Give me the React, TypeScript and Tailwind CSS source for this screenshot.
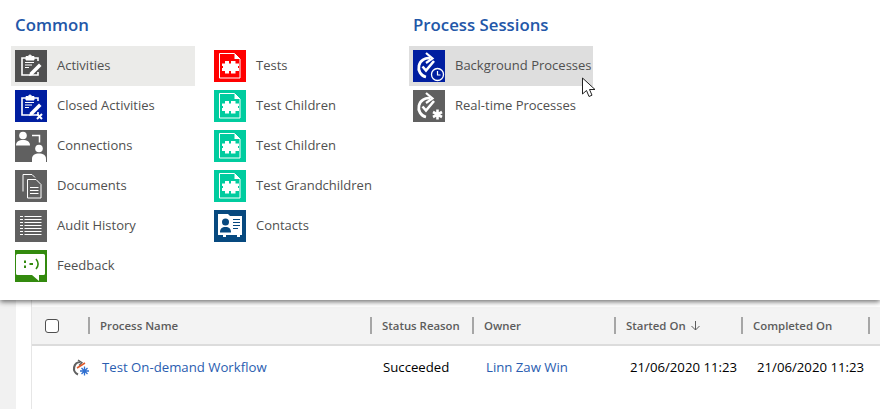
import React from 'react';

const font = "font-['Open_Sans','Noto_Sans',sans-serif]";

const Clipboard = () => (
  <g fill="none" stroke="#fff">
    <path d="M19 8h4v3M23 22v3H7V8h4" strokeWidth="1.600" />
    <path d="M11 8V6.500h2.500a1.500 1.500 0 0 1 3 0H19V8v2h-8z" fill="#fff" strokeWidth="1" />
    <path d="M10 12.500h9M10 15h7M10 17.500h4" strokeWidth="1.200" />
    <path d="M15 22.500l9-9 2.500 2.500-9 9-3.500 1z" fill="#fff" stroke="none" />
  </g>
);

const Puzzle = () => (
  <g>
    <path d="M5.500 3.500h15l5.500 5.500v19H5.500z" fill="none" stroke="#fff" strokeWidth="1" />
    <path d="M20.500 3.500V9H26z" fill="#fff" />
    <path d="M8 13.500h3V11h4v2.500h2V11h4.500v2.500H25v2.500h-1v2h1v3h-3.500v2.500H17V21h-2v2.500h-4V21H8v-3h1v-2H8z" fill="#fff" />
  </g>
);

const Process = () => (
  <g fill="none" stroke="#fff">
    <path d="M17.500 8.500A9.500 9.500 0 0 0 13 27" strokeWidth="2.800" />
    <path d="M13 3l6.500 5.500-6.500 4.500" strokeWidth="2.200" />
    <path d="M9.500 16.500l3.500 4 8-9.500" strokeWidth="2.600" />
  </g>
);

const icons: Record<string, React.ReactNode> = {
  activities: <Clipboard />,
  closed: (
    <g>
      <Clipboard />
      <path d="M22 24l5 5M27 24l-5 5" stroke="#fff" strokeWidth="2" />
    </g>
  ),
  connections: (
    <g fill="#fff">
      <circle cx="8" cy="5.500" r="3.800" />
      <path d="M1 15.500c0-4 3-5.500 7-5.500s7 1.500 7 5.500z" />
      <circle cx="24" cy="18.500" r="3.800" />
      <path d="M17 29c0-4 3-5.500 7-5.500s7 1.500 7 5.500v3H17z" />
      <path d="M17 5.500h7.500v7" fill="none" stroke="#fff" strokeWidth="1.500" />
    </g>
  ),
  documents: (
    <g fill="#606060" stroke="#fff" strokeWidth="1">
      <path d="M8 21.500V4.500h9l3 3" />
      <path d="M12.500 9.500h8.500l5 5v13.500H12.500z" />
      <path d="M15 17.500h8.500M15 20.500h8.500M15 23.500h8.500" />
    </g>
  ),
  audit: (
    <g stroke="#fff" strokeWidth="1">
      {[6.500, 9.500, 12.500, 15.500, 18.500, 21.500, 24.500].map((y) => (
        <g key={y}>
          <path d="M5 0h3" transform={`translate(0 ${y})`} />
          <path d="M9.500 0h17" transform={`translate(0 ${y})`} />
        </g>
      ))}
    </g>
  ),
  feedback: (
    <g>
      <path d="M2.500 4h26a1.500 1.500 0 0 1 1.500 1.500v18a1.500 1.500 0 0 1-1.500 1.500H24v6l-7-6H2.500A1.500 1.500 0 0 1 1 23.500v-18A1.500 1.500 0 0 1 2.500 4z" fill="#fff" />
      <path d="M10 10.500V13M10 15.500V18M14.500 14h3.500" stroke="#338a0e" strokeWidth="2" fill="none" />
      <path d="M21 9c2.500 3 2.500 7 0 10" stroke="#338a0e" strokeWidth="1.600" fill="none" />
    </g>
  ),
  puzzle: <Puzzle />,
  contacts: (
    <g>
      <path d="M4 4h10l2 2h12v19h-2v2h-3v-2H12v2H9v-2H4z" fill="#fff" />
      <circle cx="11.500" cy="12" r="3.500" fill="#07497f" />
      <path d="M6 22.500c0-4 2-5.500 5.500-5.500s5.500 1.500 5.500 5.500z" fill="#07497f" />
      <path d="M19 9.500h7M19 12.500h7M19 15.500h7M19 18.500h5" stroke="#07497f" strokeWidth="1.200" />
    </g>
  ),
  background: (
    <g>
      <Process />
      <circle cx="24.500" cy="24.500" r="6" fill="#001ea0" stroke="#fff" strokeWidth="1.300" />
      <path d="M24.500 21v4h3" fill="none" stroke="#fff" strokeWidth="1.200" />
    </g>
  ),
  realtime: (
    <g>
      <Process />
      <path d="M24.500 19.500v10M20 22l9 5M29 22l-9 5" stroke="#fff" strokeWidth="2.600" />
    </g>
  ),
};

interface NavItem {
  label: string;
  icon: string;
  bg: string;
  row?: string;
}

const columns: { title: string; items: NavItem[] }[] = [
  {
    title: 'Common',
    items: [
      { label: 'Activities', icon: 'activities', bg: 'bg-[#505050]', row: 'bg-[#ebebe9]' },
      { label: 'Closed Activities', icon: 'closed', bg: 'bg-[#001ea0]' },
      { label: 'Connections', icon: 'connections', bg: 'bg-[#606060]' },
      { label: 'Documents', icon: 'documents', bg: 'bg-[#606060]' },
      { label: 'Audit History', icon: 'audit', bg: 'bg-[#606060]' },
      { label: 'Feedback', icon: 'feedback', bg: 'bg-[#338a0e]' },
    ],
  },
  {
    title: '',
    items: [
      { label: 'Tests', icon: 'puzzle', bg: 'bg-[#ff0000]' },
      { label: 'Test Children', icon: 'puzzle', bg: 'bg-[#00cc9f]' },
      { label: 'Test Children', icon: 'puzzle', bg: 'bg-[#00cc9f]' },
      { label: 'Test Grandchildren', icon: 'puzzle', bg: 'bg-[#00cc9f]' },
      { label: 'Contacts', icon: 'contacts', bg: 'bg-[#07497f]' },
    ],
  },
  {
    title: 'Process Sessions',
    items: [
      { label: 'Background Processes', icon: 'background', bg: 'bg-[#001ea0]', row: 'bg-[#dedede]' },
      { label: 'Real-time Processes', icon: 'realtime', bg: 'bg-[#606060]' },
    ],
  },
];

const headers = [
  { label: 'Process Name', w: 'w-[282px]' },
  { label: 'Status Reason', w: 'w-[102px]' },
  { label: 'Owner', w: 'w-[142px]' },
  { label: 'Started On', w: 'w-[127px]', sort: true },
  { label: 'Completed On', w: 'w-[127px]' },
];

const NavRow = ({ item }: { item: NavItem }) => (
  <div className={`flex h-10 w-[184px] items-center gap-[10px] whitespace-nowrap pl-1 ${item.row ?? ''}`}>
    <span className={`flex h-8 w-8 shrink-0 ${item.bg}`}>
      <svg width="32" height="32" viewBox="0 0 32 32">
        {icons[item.icon]}
      </svg>
    </span>
    <span className="pb-px text-[13px] leading-none text-[#505050]">{item.label}</span>
  </div>
);

export default function App() {
  return (
    <div className={`relative flex h-[409px] w-[880px] flex-col overflow-hidden bg-white ${font}`}>
      <div className="relative z-10 flex h-[300px] shrink-0 gap-[15px] bg-white pl-[11px] pt-[14px] shadow-[0_2px_5px_rgba(0,0,0,0.55)]">
        {columns.map((col, i) => (
          <div key={i} className="w-[184px]">
            <h2 className="h-8 pl-1 text-[16.800px] leading-[22px] font-semibold text-[#2357a8]">{col.title}</h2>
            {col.items.map((item, j) => (
              <NavRow key={j} item={item} />
            ))}
          </div>
        ))}
      </div>

      <div className="flex flex-1">
        <div className="w-4 bg-[#f1f1f1]" />
        <div className="w-[15px] bg-white" />
        <div className="flex-1 border-l border-[#e6e6e6] pt-[7px]">
          <div className="flex h-[39px] items-center border-b-2 border-[#dcdcdc] bg-[#f3f3f3]">
            <div className="w-[56px] shrink-0 pl-[13px]">
              <div className="h-[14px] w-[14px] rounded-[3px] border border-[#505050] bg-white" />
            </div>
            {headers.map((h) => (
              <div key={h.label} className={`flex shrink-0 items-center ${h.w}`}>
                <span className="h-[17px] w-0.5 bg-[#a6a6a6]" />
                <span className="flex items-center gap-1 whitespace-nowrap pl-[10px] text-[11.400px] font-semibold text-[#5c5c5c]">
                  {h.label}
                  {h.sort && (
                    <svg width="11" height="11" viewBox="0 0 11 11" fill="none" stroke="#5c5c5c" strokeWidth="1">
                      <path d="M5.500 1v9M1.500 6l4 4 4-4" />
                    </svg>
                  )}
                </span>
              </div>
            ))}
            <span className="h-[17px] w-0.5 bg-[#a6a6a6]" />
          </div>
          <div className="flex h-[44px] items-center whitespace-nowrap text-[13.200px]">
            <svg className="ml-10 shrink-0" width="18" height="18" viewBox="0 0 18 18">
              <path d="M8.500 3A6.500 6.500 0 0 0 6 15.500" fill="none" stroke="#606060" strokeWidth="2.200" />
              <path d="M6 1l4 2.500-3 3" fill="none" stroke="#606060" strokeWidth="1.300" />
              <path d="M5 9l8-5" stroke="#e0592b" strokeWidth="1.500" />
              <path d="M8 12h9M12.500 7.500v9M9.500 9l6 6M15.500 9l-6 6" stroke="#2f6fd0" strokeWidth="1.300" />
            </svg>
            <span className="ml-3 w-[281px] shrink-0 text-[#2a5db0]">Test On-demand Workflow</span>
            <span className="w-[103px] shrink-0 text-black">Succeeded</span>
            <span className="w-[144px] shrink-0 text-[#2a5db0]">Linn Zaw Win</span>
            <span className="w-[127px] shrink-0 text-black">21/06/2020 11:23</span>
            <span className="shrink-0 text-black">21/06/2020 11:23</span>
          </div>
        </div>
      </div>

      {/* mouse pointer */}
      <svg className="absolute left-[581px] top-[77px] z-20" width="16" height="22" viewBox="0 0 16 22">
        <path d="M1.500 1v16l4-3.500 2.500 6 3-1.300-2.500-5.700h5.500z" fill="#fff" stroke="#222" strokeWidth="1" />
      </svg>
    </div>
  );
}
